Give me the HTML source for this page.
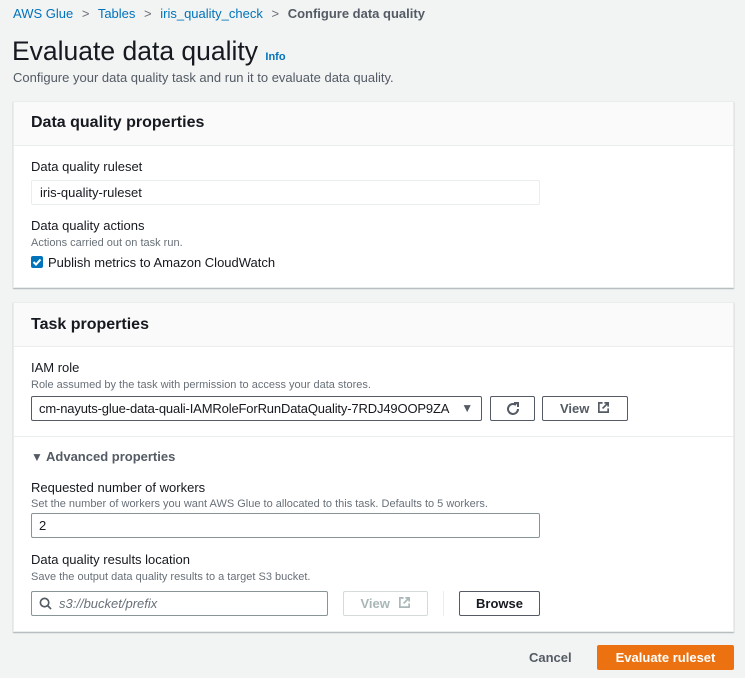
<!DOCTYPE html>
<html><head><meta charset="utf-8"><style>
*{box-sizing:border-box;margin:0;padding:0}
body{width:745px;height:678px;background:#f2f3f3;font-family:"Liberation Sans",sans-serif;color:#16191f;position:relative;overflow:hidden;font-size:13px}
.a{position:absolute;white-space:nowrap}
.lnk{color:#0073bb}
.panel{position:absolute;left:13px;width:721px;background:#fff;border:1px solid #eaeded;box-shadow:0 1px 1px rgba(0,28,36,.3)}
.ph{position:absolute;left:0;top:0;right:0;height:44px;background:#fafafa;border-bottom:1px solid #eaeded}
.h2{font-size:16px;font-weight:bold}
.desc{font-size:11px;color:#687078}
.inp{position:absolute;background:#fff;border:1px solid #aab7b8;border-radius:2px;height:25px;padding:0 8px;line-height:23px;font-size:13px}
.btn{position:absolute;border:1px solid #545b64;border-radius:2px;height:25px;background:#fff;font-weight:bold;color:#545b64;text-align:center;line-height:23px;font-size:13px}
</style></head><body>
<div class="a" style="left:13px;top:6px;font-size:13px"><span class="lnk">AWS Glue</span> <span style="color:#687078;margin:0 5px">&gt;</span> <span class="lnk">Tables</span> <span style="color:#687078;margin:0 5px">&gt;</span> <span class="lnk">iris_quality_check</span> <span style="color:#687078;margin:0 5px">&gt;</span> <b style="color:#545b64">Configure data quality</b></div>
<div class="a" style="left:12px;top:36px;font-size:26.5px">Evaluate data quality <span class="lnk" style="font-size:11px;font-weight:bold">Info</span></div>
<div class="a" style="left:13px;top:70px;font-size:13px;color:#545b64">Configure your data quality task and run it to evaluate data quality.</div>

<div class="panel" style="top:101px;height:187px">
<div class="ph"></div>
<div class="a h2" style="left:17px;top:12px">Data quality properties</div>
<div class="a" style="left:17px;top:57px">Data quality ruleset</div>
<div class="inp" style="left:17px;top:78px;width:509px;border-color:#eaeded">iris-quality-ruleset</div>
<div class="a" style="left:17px;top:116px">Data quality actions</div>
<div class="a desc" style="left:17px;top:135px">Actions carried out on task run.</div>
<div class="a" style="left:17px;top:154px;width:12px;height:12px;background:#0073bb;border-radius:2px"><svg width="12" height="12" viewBox="0 0 12 12" style="position:absolute;left:0;top:0"><path d="M2.5 6l2.5 2.5 4.5-5" stroke="#fff" stroke-width="2" fill="none"/></svg></div>
<div class="a" style="left:34px;top:153px">Publish metrics to Amazon CloudWatch</div>
</div>

<div class="panel" style="top:302px;height:330px">
<div class="ph"></div>
<div class="a h2" style="left:17px;top:13px">Task properties</div>
<div class="a" style="left:17px;top:57px">IAM role</div>
<div class="a desc" style="left:17px;top:76px">Role assumed by the task with permission to access your data stores.</div>
<div class="inp" style="left:17px;top:93px;width:451px;border-color:#545b64;font-size:13px;padding-left:7px;letter-spacing:-0.15px">cm-nayuts-glue-data-quali-IAMRoleForRunDataQuality-7RDJ49OOP9ZA<span style="position:absolute;right:8px;top:0;font-size:12px;color:#545b64">▼</span></div>
<div class="btn" style="left:476px;top:93px;width:45px"><svg width="16" height="16" viewBox="0 0 16 16" style="margin-top:4px"><path d="M13 8a5 5 0 1 1-2-4" stroke="#545b64" stroke-width="2" fill="none"/><path d="M9 2h4v4" stroke="#545b64" stroke-width="2" fill="none"/></svg></div>
<div class="btn" style="left:528px;top:93px;width:86px">View <svg width="13" height="13" viewBox="0 0 14 14" style="vertical-align:-1px;margin-left:4px"><path d="M6 2H2v10h10V8M8 2h4v4M12 2L6 8" stroke="#545b64" stroke-width="1.8" fill="none"/></svg></div>
<div class="a" style="left:0;right:0;top:133px;height:1px;background:#eaeded"></div>
<div class="a" style="left:17px;top:146px;font-weight:bold;color:#545b64"><span style="font-size:12px">▼</span> Advanced properties</div>
<div class="a" style="left:17px;top:177px">Requested number of workers</div>
<div class="a desc" style="left:17px;top:195px">Set the number of workers you want AWS Glue to allocated to this task. Defaults to 5 workers.</div>
<div class="inp" style="left:17px;top:210px;width:509px;border-color:#879596;padding-left:7px">2</div>
<div class="a" style="left:17px;top:249px">Data quality results location</div>
<div class="a desc" style="left:17px;top:268px">Save the output data quality results to a target S3 bucket.</div>
<div class="inp" style="left:17px;top:288px;width:297px;border-color:#879596;padding-left:27px;font-style:italic;color:#687078"><svg width="13" height="13" viewBox="0 0 14 14" style="position:absolute;left:7px;top:5px"><circle cx="6" cy="6" r="4.5" stroke="#545b64" stroke-width="1.8" fill="none"/><path d="M9.3 9.3L13 13" stroke="#545b64" stroke-width="1.8"/></svg>s3://bucket/prefix</div>
<div class="btn" style="left:329px;top:288px;width:85px;border-color:#d5dbdb;color:#aab7b8">View <svg width="13" height="13" viewBox="0 0 14 14" style="vertical-align:-1px;margin-left:4px"><path d="M6 2H2v10h10V8M8 2h4v4M12 2L6 8" stroke="#aab7b8" stroke-width="1.8" fill="none"/></svg></div>
<div class="a" style="left:429px;top:288px;width:1px;height:25px;background:#eaeded"></div>
<div class="btn" style="left:445px;top:288px;width:81px;color:#16191f">Browse</div>
</div>

<div class="a" style="left:529px;top:650px;font-weight:bold;color:#545b64">Cancel</div>
<div class="a" style="left:597px;top:645px;width:137px;height:25px;background:#ec7211;border-radius:2px;color:#fff;font-weight:bold;text-align:center;line-height:25px">Evaluate ruleset</div>
</body></html>
